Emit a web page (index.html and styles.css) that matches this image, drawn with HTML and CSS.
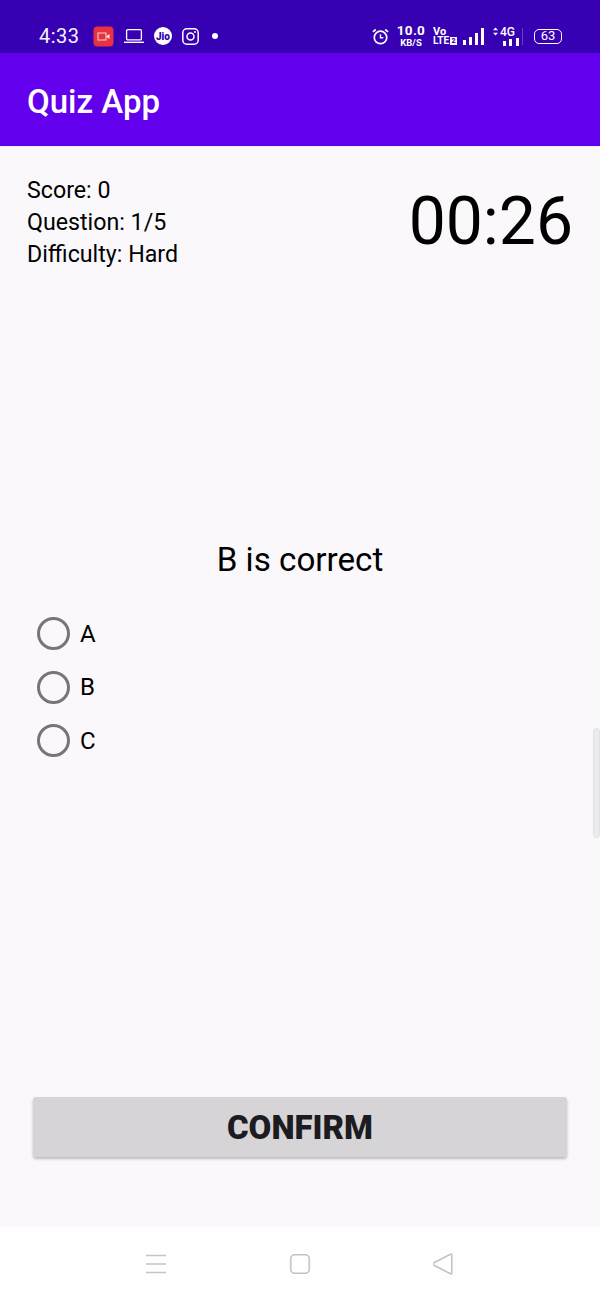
FILE: index.html
```html
<!DOCTYPE html>
<html lang="en">
<head>
<meta charset="utf-8">
<title>Quiz App</title>
<link rel="stylesheet" href="styles.css">
</head>
<body>
<div class="screen">
  <header class="status">
    <span class="time">4:33</span>
    <div class="notif">
      <svg class="ic" width="21" height="21" viewBox="0 0 21 21"><rect x="0.5" y="0.5" width="20" height="20" rx="4" fill="#E8323F"/><rect x="5" y="7" width="8" height="7" fill="none" stroke="#fff" stroke-opacity=".8"/><path d="M13.5 10l3-2v5l-3-2z" fill="#fff" fill-opacity=".85"/></svg>
      <svg class="ic" width="20" height="16" viewBox="0 0 20 16"><rect x="2.6" y="1.6" width="14.8" height="10.3" rx="1.2" fill="none" stroke="#fff" stroke-width="1.3"/><rect x="0" y="13.6" width="20" height="1.4" fill="#fff"/></svg>
      <span class="jio">Jio</span>
      <svg class="ic" width="17" height="17" viewBox="0 0 17 17"><rect x="0.8" y="0.8" width="15.4" height="15.4" rx="4" fill="none" stroke="#fff" stroke-width="1.5"/><circle cx="8.5" cy="8.5" r="3.5" fill="none" stroke="#fff" stroke-width="1.5"/><circle cx="13" cy="4" r="1" fill="#fff"/></svg>
      <span class="dot"></span>
    </div>
    <div class="sys">
      <svg class="ic" width="17" height="17" viewBox="0 0 18 18"><circle cx="9" cy="10" r="6.6" fill="none" stroke="#fff" stroke-width="1.8"/><path d="M9 6.5V10.4H12" fill="none" stroke="#fff" stroke-width="1.5"/><path d="M1 4.2L4 1.6M17 4.2L14 1.6" stroke="#fff" stroke-width="1.8"/></svg>
      <div class="speed"><span class="speed-n">10.0</span><span class="speed-u">KB/S</span></div>
      <div class="volte"><span>Vo</span><span class="lte">LTE<b class="sim">2</b></span></div>
      <svg class="ic bars" width="21" height="17" viewBox="0 0 21 17"><rect x="0" y="12" width="3" height="5" fill="#fff"/><rect x="6" y="9" width="3" height="8" fill="#fff"/><rect x="12" y="5" width="3" height="12" fill="#fff"/><rect x="18" y="0" width="3" height="17" fill="#fff"/></svg>
      <div class="net">
        <div class="net-top">
          <svg class="ic" width="5" height="9" viewBox="0 0 5 9"><path d="M0 3.2L2.5 .5 5 3.2zM0 5.8L2.5 8.5 5 5.8z" fill="#fff"/></svg>
          <span>4G</span>
        </div>
        <svg class="ic net-bars" width="16" height="8" viewBox="0 0 16 8"><rect x="0" y="3" width="3" height="5" fill="#fff"/><rect x="6" y="1" width="3" height="7" fill="#fff"/><rect x="13" y="0" width="3" height="8" fill="#fff"/></svg>
      </div>
      <span class="net-off"></span>
      <div class="batt"><span>63</span></div>
    </div>
  </header>

  <div class="appbar"><h1 class="title">Quiz App</h1></div>

  <main class="main">
    <section class="top">
      <div class="stats">
        <p>Score: 0</p>
        <p>Question: 1/5</p>
        <p>Difficulty: Hard</p>
      </div>
      <div class="timer">00:26</div>
    </section>
    <h2 class="question">B is correct</h2>
    <ul class="options">
      <li class="option"><span class="radio"></span><span>A</span></li>
      <li class="option"><span class="radio"></span><span>B</span></li>
      <li class="option"><span class="radio"></span><span>C</span></li>
    </ul>
    <button class="confirm" type="button">CONFIRM</button>
    <span class="scrollbar"></span>
  </main>

  <nav class="nav">
    <svg width="22" height="20" viewBox="0 0 22 20"><path d="M1 1.5H21M1 10H21M1 18.5H21" stroke="#C4C2C6" stroke-width="1.6"/></svg>
    <svg width="22" height="22" viewBox="0 0 22 22"><rect x="1.7" y="1.7" width="18.6" height="18.6" rx="4" fill="none" stroke="#C4C2C6" stroke-width="1.6"/></svg>
    <svg width="22" height="24" viewBox="2 0 22 24"><path d="M19.5 2.2C20.2 1.8 20.8 2.2 20.8 3V21C20.8 21.8 20.2 22.2 19.5 21.8L2 12.8C1.3 12.4 1.3 11.6 2 11.2z" fill="none" stroke="#C4C2C6" stroke-width="1.6" stroke-linejoin="round"/></svg>
  </nav>
</div>
</body>
</html>
```
FILE: styles.css
```css
* { box-sizing: border-box; }
html, body { margin: 0; padding: 0; }
body { width: 600px; height: 1300px; overflow: hidden; font-family: Roboto, "Liberation Sans", sans-serif; color: #000; }
.screen { width: 600px; height: 1300px; display: flex; flex-direction: column; background: #FAF8FB; }

.status { height: 53px; flex: none; background: #3700B3; color: #fff; display: flex; align-items: center; padding: 19px 38px 0 39px; }
.ic { display: block; flex: none; }
.time { font-size: 20px; letter-spacing: .5px; width: 54px; opacity: .95; }
.notif { display: flex; align-items: center; gap: 10px; }
.jio { width: 18px; height: 18px; border-radius: 50%; background: #fff; color: #3700B3; font-size: 10px; font-weight: 900; display: flex; align-items: center; justify-content: center; }
.dot { width: 6px; height: 6px; border-radius: 50%; background: #fff; margin-left: 3px; }
.sys { margin-left: auto; display: flex; align-items: center; }
.speed { display: flex; flex-direction: column; align-items: center; margin-left: 7px; margin-right: -1px; font-weight: 700; width: 30px; }
.speed-n { font-size: 13.5px; line-height: 11px; letter-spacing: .3px; }
.speed-u { font-size: 9.5px; line-height: 9px; margin-top: 2px; }
.volte { display: flex; flex-direction: column; margin-left: 8px; font-size: 11px; line-height: 9.5px; font-weight: 700; width: 24px; }
.lte { display: flex; align-items: center; font-size: 10px; }
.sim { background: #fff; color: #3700B3; font-size: 7px; line-height: 8px; width: 7px; text-align: center; margin-left: 1px; }
.bars { margin-left: 6px; }
.net { margin-left: 9px; width: 27px; display: flex; flex-direction: column; gap: 1px; }
.net-top { display: flex; align-items: center; gap: 2px; font-size: 12px; line-height: 10px; font-weight: 500; }
.net-bars { margin-left: 10px; }
.net-off { width: 1px; height: 17px; background: rgba(255,255,255,.25); margin-left: 2px; }
.batt { margin-left: 11px; width: 28px; height: 15px; border: 1.5px solid #fff; border-radius: 5px; font-size: 13px; line-height: 12px; display: flex; align-items: center; justify-content: center; }

.appbar { height: 93px; flex: none; background: #6200EE; display: flex; align-items: center; padding: 3px 27px 0; }
.title { margin: 0; font-size: 33px; font-weight: 500; color: #fff; }

.main { flex: 1; position: relative; display: flex; flex-direction: column; padding: 27px 33px 0; border-top: 1px solid #F1F1F1; }
.top { display: flex; justify-content: space-between; align-items: flex-start; margin-right: -6px; }
.stats { margin-left: -6px; font-size: 23.2px; line-height: 32px; }
.stats p { margin: 0; }
.timer { font-size: 66px; line-height: 78px; margin-top: 9px; }
.question { margin: 271px 0 0; font-size: 33.2px; font-weight: 400; line-height: 38px; text-align: center; }
.options { list-style: none; margin: 28px 0 0; padding: 0; }
.option { display: flex; align-items: center; height: 53.5px; font-size: 24px; padding-left: 4px; gap: 10px; }
.radio { width: 33px; height: 33px; border: 3.5px solid #767577; border-radius: 50%; }
.confirm { margin: 329.5px 0 0; height: 60px; flex: none; width: 534px; border: 0; border-radius: 3px; background: #D6D4D7; color: #1C1B1F; font: 900 33px Roboto, "Liberation Sans", sans-serif; box-shadow: 0 2px 3px rgba(0,0,0,.25); }
.scrollbar { position: absolute; right: 0; top: 581px; width: 7px; height: 110px; background: #ECEAEE; border: 1px solid #E2E0E4; border-radius: 4px; }

.nav { height: 73px; flex: none; background: #FFFEFF; display: flex; align-items: center; justify-content: center; gap: 122px; }
```
